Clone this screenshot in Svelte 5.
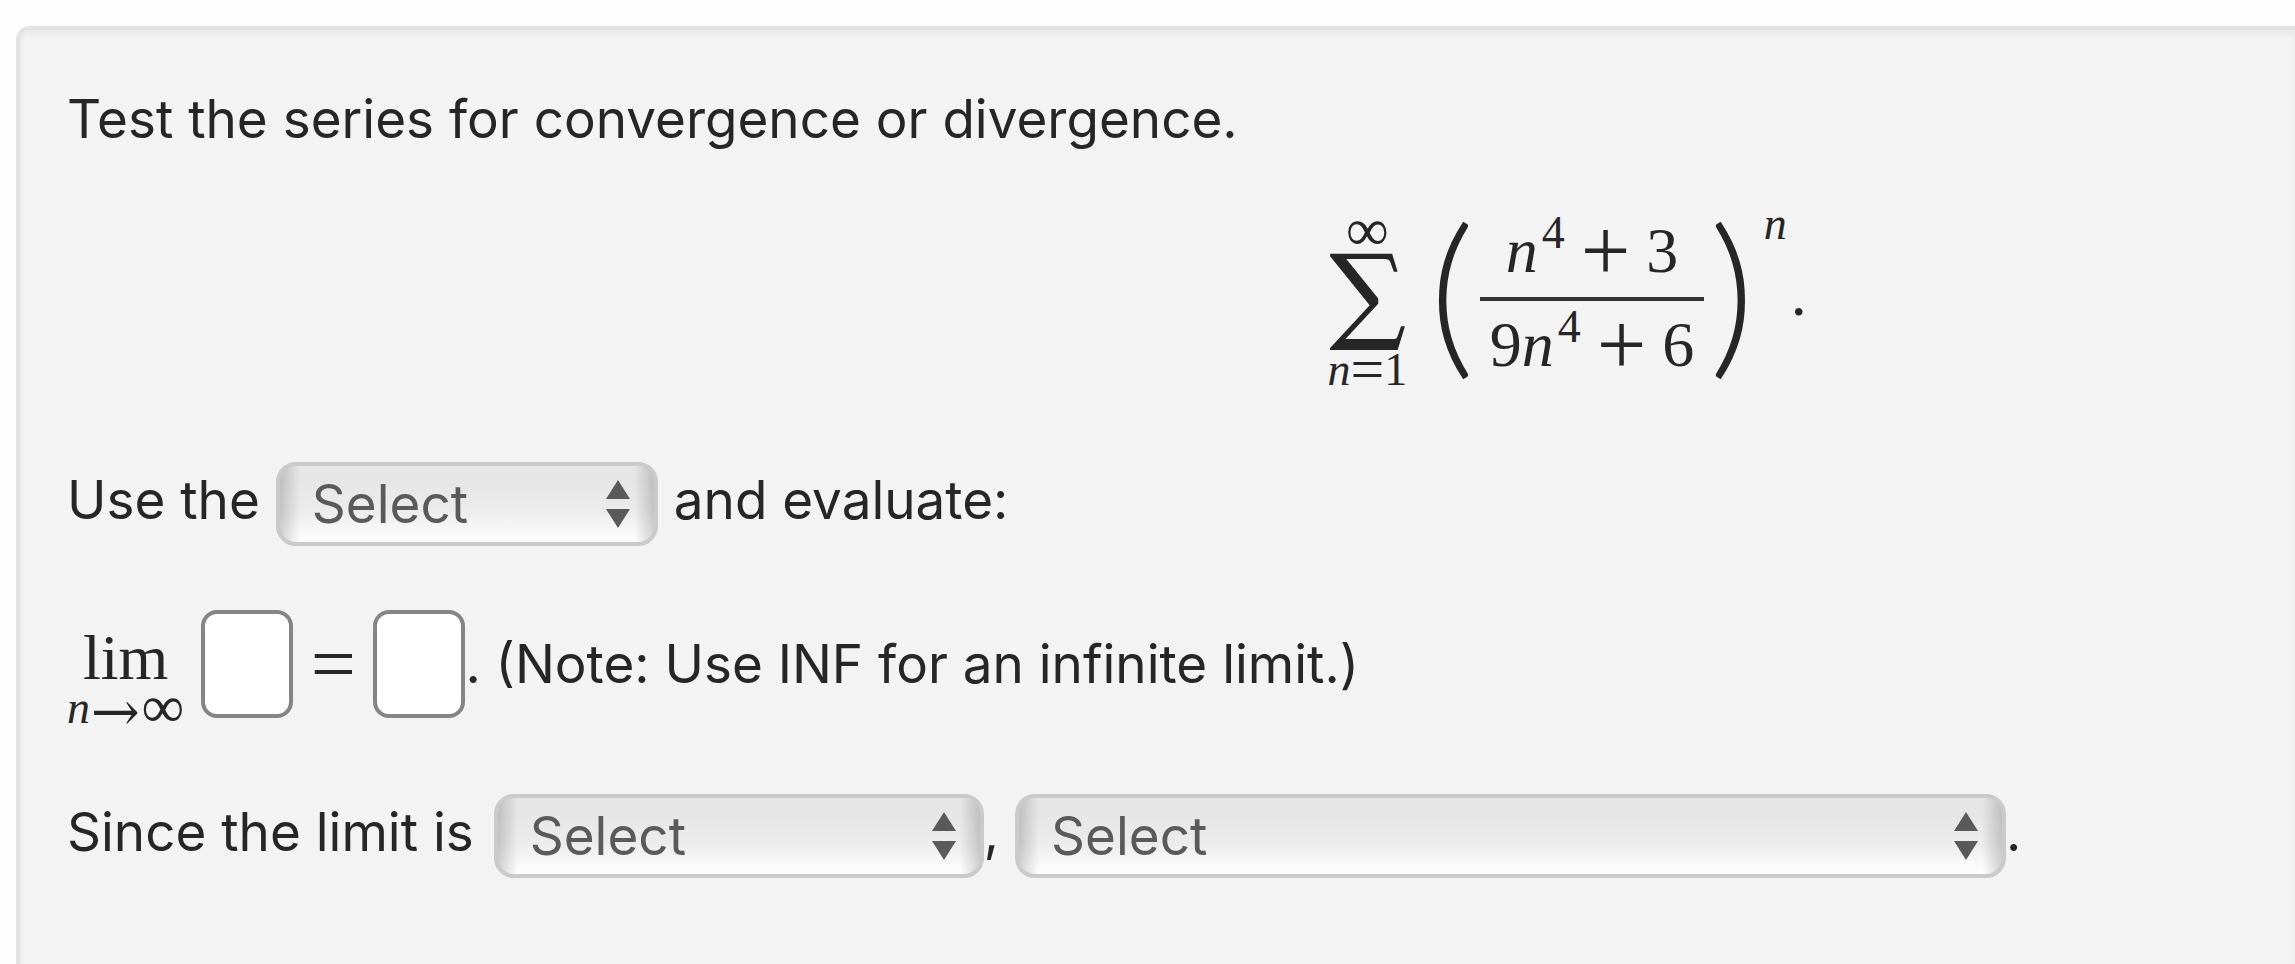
<script>
    const tests = ["Select", "Ratio Test", "Root Test"];
    const comparisons = ["Select", "less than 1", "equal to 1", "greater than 1"];
    const conclusions = [
        "Select",
        "the series converges",
        "the series diverges",
        "the test is inconclusive",
    ];

    let test = "Select";
    let comparison = "Select";
    let conclusion = "Select";
    let expression = "";
    let limit = "";
</script>

{#snippet arrows()}
    <svg class="arrows" viewBox="0 0 24 48" aria-hidden="true">
        <path d="M12 0 24 19H0zM0 29h24L12 48z" fill="#5a5a5a" />
    </svg>
{/snippet}

<main class="problem">
    <p class="prompt">Test the series for convergence or divergence.</p>

    <div class="series math">
        <span class="sum">
            <span class="over infinity">∞</span>
            <span class="sigma">∑</span>
            <span class="under"><i>n</i><span class="sign">=</span>1</span>
        </span>
        <span class="paren">(</span>
        <span class="fraction">
            <span class="part top"><i>n</i><sup>4</sup><span class="plus">+</span>3</span>
            <span class="part bottom">9<i>n</i><sup>4</sup><span class="plus">+</span>6</span>
        </span>
        <span class="paren">)</span>
        <span class="power"><i>n</i></span>
        <span class="stop">.</span>
    </div>

    <div class="row method">
        <label for="test">Use the</label>
        <span class="picker small">
            <select id="test" bind:value={test}>
                {#each tests as option}
                    <option>{option}</option>
                {/each}
            </select>
            {@render arrows()}
        </span>
        <span class="words">and evaluate:</span>
    </div>

    <div class="row limit">
        <label class="lim math" for="expression">
            <span>lim</span>
            <span class="under"><i>n</i><span class="to">→</span><span class="infinity">∞</span></span>
        </label>
        <input id="expression" type="text" bind:value={expression} />
        <label class="equals math" for="limit">=</label>
        <input id="limit" type="text" aria-label="Value of the limit" bind:value={limit} />
        <span class="note">. (Note: Use INF for an infinite limit.)</span>
    </div>

    <div class="row answer">
        <label for="comparison">Since the limit is</label>
        <span class="picker medium">
            <select id="comparison" bind:value={comparison}>
                {#each comparisons as option}
                    <option>{option}</option>
                {/each}
            </select>
            {@render arrows()}
        </span>
        <label class="comma" for="conclusion">,</label>
        <span class="picker large">
            <select id="conclusion" bind:value={conclusion}>
                {#each conclusions as option}
                    <option>{option}</option>
                {/each}
            </select>
            {@render arrows()}
        </span>
        <span class="words">.</span>
    </div>
</main>

<style>
    :global(body) {
        background: #fdfdfd;
        overflow: hidden;
    }

    .problem {
        box-sizing: border-box;
        min-height: 100vh;
        margin: 26px 0 0 16px;
        padding: 55px 0 0 47px;
        background: #f3f3f3;
        border: solid #e2e2e2;
        border-width: 4px 0 0 4px;
        border-radius: 14px 0 0 0;
        box-shadow: inset 0 4px 4px #e8e8e8;
        color: #262626;
        font-family: Inter, "Liberation Sans", sans-serif;
        font-size: 53px;
        line-height: 68px;
    }

    .prompt {
        margin: 0;
    }

    .math {
        font-family: "Liberation Serif", serif;
        font-size: 64px;
        line-height: 64px;
    }

    .series {
        display: flex;
        align-items: center;
        height: 176px;
        margin: 57px 0 0 56%;
        padding-left: 8px;
    }

    .sum,
    .lim {
        display: flex;
        flex-direction: column;
        align-items: center;
    }

    .sum {
        margin-right: 12px;
        padding-top: 4px;
    }

    .sigma,
    .to {
        font-family: "DejaVu Math TeX Gyre", "Liberation Serif", serif;
    }

    .sigma {
        font-size: 92px;
        line-height: 104px;
    }

    .over,
    .under,
    .power,
    sup {
        font-size: 46px;
        line-height: 36px;
    }

    .infinity {
        font-size: 60px;
    }

    .sign {
        font-size: 60px;
    }

    .to {
        font-size: 52px;
    }

    .under span {
        line-height: 0;
        vertical-align: -4px;
    }

    .paren {
        padding: 0 5px 20px;
        font-family: Lato, sans-serif;
        font-size: 176px;
        font-weight: 300;
        line-height: 160px;
    }

    .fraction {
        text-align: center;
    }

    .part {
        display: block;
        padding: 0 10px;
        line-height: 76px;
    }

    .top {
        padding-bottom: 8px;
    }

    .bottom {
        padding-top: 6px;
        border-top: 4px solid #333;
    }

    sup {
        margin-left: 4px;
        vertical-align: 24px;
        line-height: 0;
    }

    .plus {
        padding: 0 16px;
        font-size: 88px;
        line-height: 0;
        vertical-align: -8px;
    }

    .power {
        align-self: flex-start;
        margin-left: 4px;
        line-height: 28px;
    }

    .stop {
        padding: 0 0 8px 4px;
    }

    .row {
        display: flex;
        align-items: center;
    }

    .method {
        gap: 16px;
        margin-top: 76px;
    }

    .method > label,
    .answer > label,
    .words {
        padding-bottom: 8px;
    }

    .picker {
        display: inline-grid;
        align-items: center;
    }

    .picker > :global(*) {
        grid-area: 1 / 1;
    }

    .small {
        width: 382px;
    }

    .medium {
        width: 490px;
    }

    .large {
        width: 991px;
    }

    select {
        width: 100%;
        height: 84px;
        padding: 0 32px;
        appearance: none;
        border: 4px solid #cacaca;
        border-radius: 20px;
        background:
            linear-gradient(
                90deg,
                #0000002b,
                #00000000 20px,
                #00000000 calc(100% - 20px),
                #0000002b
            ),
            linear-gradient(#e6e6e6 20%, #ececec 60%, #fdfdfd 95%);
        color: #5a5a5a;
        font: inherit;
    }

    .arrows {
        justify-self: end;
        width: 24px;
        height: 48px;
        margin-right: 28px;
        pointer-events: none;
    }

    .limit {
        margin-top: 64px;
    }

    .lim {
        margin: 0 17px -24px 0;
    }

    input {
        box-sizing: border-box;
        width: 92px;
        height: 108px;
        padding: 8px;
        border: 4px solid #858585;
        border-radius: 16px;
        background: #fff;
        font: inherit;
    }

    .equals {
        width: 80px;
        font-size: 80px;
        text-align: center;
    }

    .answer {
        margin-top: 76px;
    }

    .answer .medium {
        margin-left: 20px;
    }

    .answer .large {
        margin-left: 16px;
    }
</style>
